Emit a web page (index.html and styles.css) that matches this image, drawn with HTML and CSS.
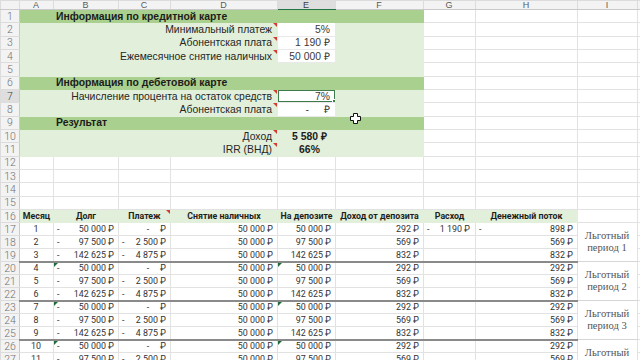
FILE: index.html
```html
<!DOCTYPE html>
<html lang="ru">
<head>
<meta charset="utf-8">
<title>Кредитная карта</title>
<link rel="stylesheet" href="styles.css">
</head>
<body>
<table class="sheet">
<colgroup>
<col class="w-rh"><col class="w-a"><col class="w-b"><col class="w-c"><col class="w-d"><col class="w-e"><col class="w-f"><col class="w-g"><col class="w-h"><col class="w-i"><col class="w-j">
</colgroup>
<tr class="hd">
<td class="ch corner"></td><td class="ch">A</td><td class="ch">B</td><td class="ch">C</td><td class="ch">D</td><td class="ch on">E</td><td class="ch">F</td><td class="ch">G</td><td class="ch">H</td><td class="ch">I</td><td class="ch"></td>
</tr>
<tr class="top">
<td class="rh">1</td><td class="dk"></td><td class="dk ttl" colspan="5">Информация по кредитной карте</td><td></td><td></td><td></td><td></td>
</tr>
<tr class="top">
<td class="rh">2</td><td class="lt"></td><td class="lt lbl cm" colspan="3">Минимальный платеж</td><td class="wh val">5%</td><td class="lt"></td><td></td><td></td><td></td><td></td>
</tr>
<tr class="top">
<td class="rh">3</td><td class="lt"></td><td class="lt lbl cm" colspan="3">Абонентская плата</td><td class="wh val">1&nbsp;190&nbsp;₽</td><td class="lt"></td><td></td><td></td><td></td><td></td>
</tr>
<tr class="top">
<td class="rh">4</td><td class="lt"></td><td class="lt lbl cm" colspan="3">Ежемесячное снятие наличных</td><td class="wh val">50&nbsp;000&nbsp;₽</td><td class="lt"></td><td></td><td></td><td></td><td></td>
</tr>
<tr class="top">
<td class="rh">5</td><td class="lt" colspan="6"></td><td></td><td></td><td></td><td></td>
</tr>
<tr class="top">
<td class="rh">6</td><td class="dk"></td><td class="dk ttl" colspan="5">Информация по дебетовой карте</td><td></td><td></td><td></td><td></td>
</tr>
<tr class="top">
<td class="rh on">7</td><td class="lt"></td><td class="lt lbl cm" colspan="3">Начисление процента на остаток средств</td><td class="wh val sel">7%</td><td class="lt"></td><td></td><td></td><td></td><td></td>
</tr>
<tr class="top">
<td class="rh">8</td><td class="lt"></td><td class="lt lbl cm" colspan="3">Абонентская плата</td><td class="wh val"><span class="zd zd-top">-</span><span>₽</span></td><td class="lt"></td><td></td><td></td><td></td><td></td>
</tr>
<tr class="top">
<td class="rh">9</td><td class="dk"></td><td class="dk ttl" colspan="5">Результат</td><td></td><td></td><td></td><td></td>
</tr>
<tr class="top">
<td class="rh">10</td><td class="lt"></td><td class="lt lbl cm" colspan="3">Доход</td><td class="lt res">5&nbsp;580&nbsp;₽</td><td class="lt"></td><td></td><td></td><td></td><td></td>
</tr>
<tr class="top">
<td class="rh">11</td><td class="lt"></td><td class="lt lbl cm" colspan="3">IRR (ВНД)</td><td class="lt res">66%</td><td class="lt"></td><td></td><td></td><td></td><td></td>
</tr>
<tr class="top"><td class="rh">12</td><td></td><td></td><td></td><td></td><td></td><td></td><td></td><td></td><td></td><td></td></tr>
<tr class="top"><td class="rh">13</td><td></td><td></td><td></td><td></td><td></td><td></td><td></td><td></td><td></td><td></td></tr>
<tr class="top"><td class="rh">14</td><td></td><td></td><td></td><td></td><td></td><td></td><td></td><td></td><td></td><td></td></tr>
<tr class="top"><td class="rh">15</td><td></td><td></td><td></td><td></td><td></td><td></td><td></td><td></td><td></td><td></td></tr>
<tr class="top thd">
<td class="rh">16</td><td class="lt">Месяц</td><td class="lt">Долг</td><td class="lt cm">Платеж</td><td class="lt">Снятие наличных</td><td class="lt">На депозите</td><td class="lt">Доход от депозита</td><td class="lt">Расход</td><td class="lt">Денежный поток</td><td></td><td></td>
</tr>

<tr class="dat">
<td class="rh">17</td><td class="c">1</td>
<td><div class="acc"><span>-</span><span>50&nbsp;000&nbsp;₽</span></div></td>
<td class="n"><span class="zd">-</span><span>₽</span></td>
<td class="n">50&nbsp;000&nbsp;₽</td><td class="n">50&nbsp;000&nbsp;₽</td><td class="n">292&nbsp;₽</td>
<td><div class="acc acc-g"><span>-</span><span>1&nbsp;190&nbsp;₽</span></div></td>
<td><div class="acc"><span>-</span><span>898&nbsp;₽</span></div></td>
<td class="per" rowspan="3">Льготный<br>период 1</td><td></td>
</tr>
<tr class="dat">
<td class="rh">18</td><td class="c">2</td>
<td><div class="acc"><span>-</span><span>97&nbsp;500&nbsp;₽</span></div></td>
<td><div class="acc"><span>-</span><span>2&nbsp;500&nbsp;₽</span></div></td>
<td class="n">50&nbsp;000&nbsp;₽</td><td class="n">97&nbsp;500&nbsp;₽</td><td class="n">569&nbsp;₽</td><td></td><td class="n">569&nbsp;₽</td><td></td>
</tr>
<tr class="dat sep">
<td class="rh">19</td><td class="c">3</td>
<td><div class="acc"><span>-</span><span>142&nbsp;625&nbsp;₽</span></div></td>
<td><div class="acc"><span>-</span><span>4&nbsp;875&nbsp;₽</span></div></td>
<td class="n">50&nbsp;000&nbsp;₽</td><td class="n">142&nbsp;625&nbsp;₽</td><td class="n">832&nbsp;₽</td><td></td><td class="n">832&nbsp;₽</td><td class="nb"></td>
</tr>

<tr class="dat">
<td class="rh">20</td><td class="c">4</td>
<td class="er"><div class="acc"><span>-</span><span>50&nbsp;000&nbsp;₽</span></div></td>
<td class="n"><span class="zd">-</span><span>₽</span></td>
<td class="n">50&nbsp;000&nbsp;₽</td><td class="n er">50&nbsp;000&nbsp;₽</td><td class="n">292&nbsp;₽</td><td></td><td class="n">292&nbsp;₽</td>
<td class="per" rowspan="3">Льготный<br>период 2</td><td></td>
</tr>
<tr class="dat">
<td class="rh">21</td><td class="c">5</td>
<td><div class="acc"><span>-</span><span>97&nbsp;500&nbsp;₽</span></div></td>
<td><div class="acc"><span>-</span><span>2&nbsp;500&nbsp;₽</span></div></td>
<td class="n">50&nbsp;000&nbsp;₽</td><td class="n">97&nbsp;500&nbsp;₽</td><td class="n">569&nbsp;₽</td><td></td><td class="n">569&nbsp;₽</td><td></td>
</tr>
<tr class="dat sep">
<td class="rh">22</td><td class="c">6</td>
<td><div class="acc"><span>-</span><span>142&nbsp;625&nbsp;₽</span></div></td>
<td><div class="acc"><span>-</span><span>4&nbsp;875&nbsp;₽</span></div></td>
<td class="n">50&nbsp;000&nbsp;₽</td><td class="n">142&nbsp;625&nbsp;₽</td><td class="n">832&nbsp;₽</td><td></td><td class="n">832&nbsp;₽</td><td class="nb"></td>
</tr>

<tr class="dat">
<td class="rh">23</td><td class="c">7</td>
<td class="er"><div class="acc"><span>-</span><span>50&nbsp;000&nbsp;₽</span></div></td>
<td class="n"><span class="zd">-</span><span>₽</span></td>
<td class="n">50&nbsp;000&nbsp;₽</td><td class="n er">50&nbsp;000&nbsp;₽</td><td class="n">292&nbsp;₽</td><td></td><td class="n">292&nbsp;₽</td>
<td class="per" rowspan="3">Льготный<br>период 3</td><td></td>
</tr>
<tr class="dat">
<td class="rh">24</td><td class="c">8</td>
<td><div class="acc"><span>-</span><span>97&nbsp;500&nbsp;₽</span></div></td>
<td><div class="acc"><span>-</span><span>2&nbsp;500&nbsp;₽</span></div></td>
<td class="n">50&nbsp;000&nbsp;₽</td><td class="n">97&nbsp;500&nbsp;₽</td><td class="n">569&nbsp;₽</td><td></td><td class="n">569&nbsp;₽</td><td></td>
</tr>
<tr class="dat sep">
<td class="rh">25</td><td class="c">9</td>
<td><div class="acc"><span>-</span><span>142&nbsp;625&nbsp;₽</span></div></td>
<td><div class="acc"><span>-</span><span>4&nbsp;875&nbsp;₽</span></div></td>
<td class="n">50&nbsp;000&nbsp;₽</td><td class="n">142&nbsp;625&nbsp;₽</td><td class="n">832&nbsp;₽</td><td></td><td class="n">832&nbsp;₽</td><td class="nb"></td>
</tr>

<tr class="dat">
<td class="rh">26</td><td class="c">10</td>
<td class="er"><div class="acc"><span>-</span><span>50&nbsp;000&nbsp;₽</span></div></td>
<td class="n"><span class="zd">-</span><span>₽</span></td>
<td class="n">50&nbsp;000&nbsp;₽</td><td class="n er">50&nbsp;000&nbsp;₽</td><td class="n">292&nbsp;₽</td><td></td><td class="n">292&nbsp;₽</td>
<td class="per" rowspan="3">Льготный<br>период 4</td><td></td>
</tr>
<tr class="dat">
<td class="rh">27</td><td class="c">11</td>
<td><div class="acc"><span>-</span><span>97&nbsp;500&nbsp;₽</span></div></td>
<td><div class="acc"><span>-</span><span>2&nbsp;500&nbsp;₽</span></div></td>
<td class="n">50&nbsp;000&nbsp;₽</td><td class="n">97&nbsp;500&nbsp;₽</td><td class="n">569&nbsp;₽</td><td></td><td class="n">569&nbsp;₽</td><td></td>
</tr>
<tr class="dat">
<td class="rh">28</td><td class="c">12</td>
<td><div class="acc"><span>-</span><span>142&nbsp;625&nbsp;₽</span></div></td>
<td><div class="acc"><span>-</span><span>4&nbsp;875&nbsp;₽</span></div></td>
<td class="n">50&nbsp;000&nbsp;₽</td><td class="n">142&nbsp;625&nbsp;₽</td><td class="n">832&nbsp;₽</td><td></td><td class="n">832&nbsp;₽</td><td></td>
</tr>
</table>

<svg class="cursor" width="11" height="11" viewBox="0 0 11 11" aria-hidden="true">
<path d="M3.5 0.5h4v3h3v4h-3v3h-4v-3h-3v-4h3z" fill="#fff" stroke="#111" stroke-width="1"/>
</svg>
</body>
</html>
```

FILE: styles.css
```css
html, body {
  margin: 0;
  padding: 0;
}
body {
  width: 640px;
  height: 360px;
  overflow: hidden;
  background: #ffffff;
  position: relative;
}
.sheet {
  border-collapse: collapse;
  table-layout: fixed;
  width: 640px;
  font-family: "Liberation Sans", Arial, sans-serif;
  font-size: 10.4px;
  color: #262626;
}
.w-rh { width: 19px; }
.w-a { width: 34px; }
.w-b { width: 65px; }
.w-c { width: 52px; }
.w-d { width: 107px; }
.w-e { width: 58px; }
.w-f { width: 88px; }
.w-g { width: 52px; }
.w-h { width: 102px; }
.w-i { width: 60px; }
.w-j { width: 3px; }

.sheet td {
  border: 1px solid #e2e2e2;
  padding: 0 4px 0 3px;
  white-space: nowrap;
  overflow: hidden;
  line-height: 11px;
  vertical-align: middle;
  position: relative;
}
.hd { height: 9px; }
.top { height: 13.33px; }
.dat { height: 13px; }

.ch {
  background: #f3f3f3;
  color: #5a5a5a;
  text-align: center;
  font-family: "Liberation Sans", Arial, sans-serif;
  font-size: 9px;
  line-height: 8px !important;
  border-color: #dcdcdc !important;
  border-bottom-color: #c9c9c9 !important;
}
.ch.on {
  background: #dedede;
  color: #3e3e3e;
  border-bottom: 1px solid #217346 !important;
}
.rh {
  background: #f3f3f3;
  color: #707070;
  text-align: center;
  font-family: Roboto, "Liberation Sans", sans-serif;
  font-size: 10.5px;
  font-weight: 300;
  padding: 0 !important;
  border-color: #dcdcdc !important;
  border-right-color: #c9c9c9 !important;
}
.rh.on {
  background: #dedede;
  color: #444;
}

.dk {
  background: #a9d08e;
  border-color: #a9d08e !important;
}
.lt {
  background: #e2efda;
  border-color: #e2efda !important;
}
.wh {
  background: #ffffff;
  border-color: #e9e9e9 !important;
}
.ttl {
  font-weight: bold;
  color: #1c1c1c;
  padding-left: 2px !important;
}
.lbl {
  text-align: right;
  padding-right: 5px !important;
}
.val {
  text-align: right;
  color: #3a3a3a;
  padding-right: 5px !important;
}
.res {
  text-align: center;
  font-weight: bold;
  color: #1c1c1c;
  padding-left: 10px !important;
}
.zd {
  margin-right: 11px;
}
.zd-top {
  margin-right: 15px;
}

/* comment indicator */
.cm::after {
  content: "";
  position: absolute;
  top: 0;
  right: 0;
  width: 0;
  height: 0;
  border-top: 4px solid #d63a2f;
  border-left: 4px solid transparent;
}
/* error indicator */
.er::before {
  content: "";
  position: absolute;
  top: 0;
  left: 0;
  width: 0;
  height: 0;
  border-top: 4px solid #1f6b3a;
  border-right: 4px solid transparent;
}

.sel::before {
  content: "";
  position: absolute;
  left: -1px;
  top: -1px;
  right: -1px;
  bottom: -1px;
  border: 2px solid #3d7a4c;
}
.sel::after {
  content: "";
  position: absolute;
  right: -3px;
  bottom: -3px;
  width: 4px;
  height: 4px;
  background: #3d7a4c;
  border: 1px solid #fff;
}

.thd td {
  font-family: Roboto, "Liberation Sans", sans-serif;
  font-size: 8.8px;
  font-weight: bold;
  color: #1e1e1e;
  text-align: center;
  padding: 0 1px;
}
.thd td.rh {
  font-weight: 300;
  font-size: 10.5px;
  color: #707070;
}

.dat td {
  font-family: Roboto, "Liberation Sans", sans-serif;
  font-size: 8.9px;
  color: #333;
}
.dat td.rh {
  font-size: 10.5px;
  color: #707070;
}
.c { text-align: center; }
.n { text-align: right; }
.acc {
  display: flex;
  justify-content: space-between;
}
.acc-g {
  padding-right: 1px;
}
.sep td {
  border-bottom: 2px solid #8a8a8a;
}
.sep td.rh {
  border-bottom: 1px solid #dcdcdc;
}
.sep td.nb {
  border-bottom: 1px solid #e2e2e2;
}
.dat td.per {
  font-family: "Liberation Serif", "DejaVu Serif", serif;
  font-size: 10.6px;
  line-height: 12px;
  color: #555;
  text-align: center;
  white-space: normal;
  border-bottom: 1px solid #d6d6d6;
}

.cursor {
  position: absolute;
  left: 350px;
  top: 113px;
}
```
